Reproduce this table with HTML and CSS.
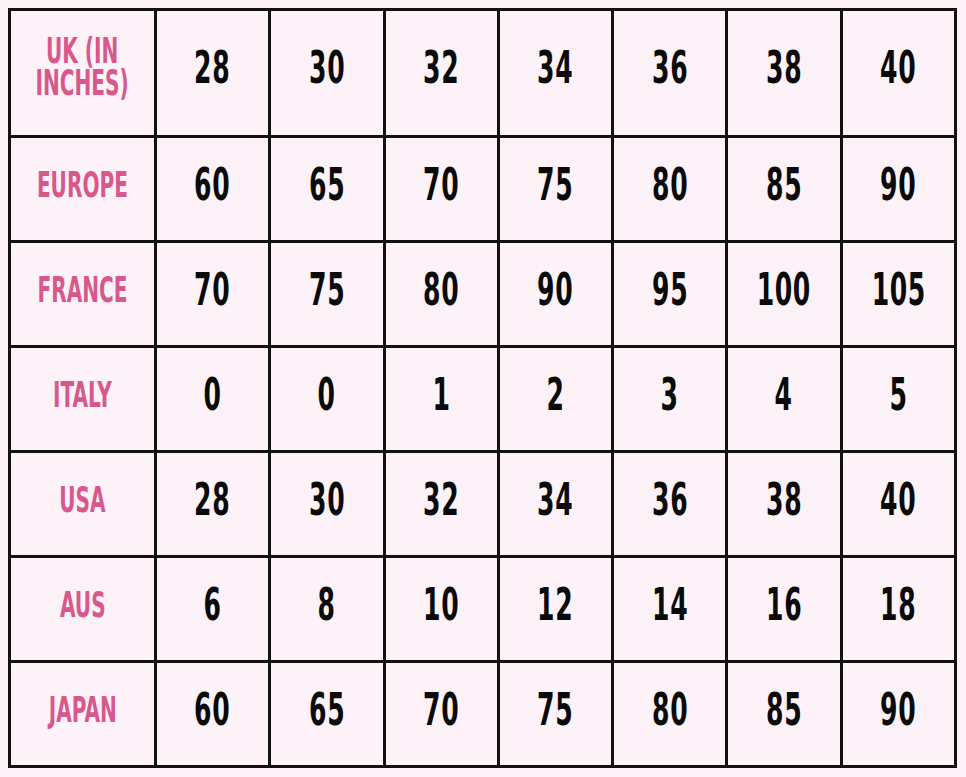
FILE: index.html
```html
<!DOCTYPE html>
<html>
<head>
<meta charset="utf-8">
<link rel="stylesheet" href="styles.css">
</head>
<body>
<div class="chart">
  <div class="cell head first"><span class="t"><span class="ln">UK (IN</span><span class="ln">INCHES)</span></span></div>
  <div class="cell first"><span class="n">28</span></div><div class="cell first"><span class="n">30</span></div><div class="cell first"><span class="n">32</span></div><div class="cell first"><span class="n">34</span></div><div class="cell first"><span class="n">36</span></div><div class="cell first"><span class="n">38</span></div><div class="cell first"><span class="n">40</span></div>

  <div class="cell head"><span class="t">EUROPE</span></div>
  <div class="cell"><span class="n">60</span></div><div class="cell"><span class="n">65</span></div><div class="cell"><span class="n">70</span></div><div class="cell"><span class="n">75</span></div><div class="cell"><span class="n">80</span></div><div class="cell"><span class="n">85</span></div><div class="cell"><span class="n">90</span></div>

  <div class="cell head"><span class="t">FRANCE</span></div>
  <div class="cell"><span class="n">70</span></div><div class="cell"><span class="n">75</span></div><div class="cell"><span class="n">80</span></div><div class="cell"><span class="n">90</span></div><div class="cell"><span class="n">95</span></div><div class="cell"><span class="n">100</span></div><div class="cell"><span class="n">105</span></div>

  <div class="cell head"><span class="t">ITALY</span></div>
  <div class="cell"><span class="n">0</span></div><div class="cell"><span class="n">0</span></div><div class="cell"><span class="n">1</span></div><div class="cell"><span class="n">2</span></div><div class="cell"><span class="n">3</span></div><div class="cell"><span class="n">4</span></div><div class="cell"><span class="n">5</span></div>

  <div class="cell head"><span class="t">USA</span></div>
  <div class="cell"><span class="n">28</span></div><div class="cell"><span class="n">30</span></div><div class="cell"><span class="n">32</span></div><div class="cell"><span class="n">34</span></div><div class="cell"><span class="n">36</span></div><div class="cell"><span class="n">38</span></div><div class="cell"><span class="n">40</span></div>

  <div class="cell head"><span class="t">AUS</span></div>
  <div class="cell"><span class="n">6</span></div><div class="cell"><span class="n">8</span></div><div class="cell"><span class="n">10</span></div><div class="cell"><span class="n">12</span></div><div class="cell"><span class="n">14</span></div><div class="cell"><span class="n">16</span></div><div class="cell"><span class="n">18</span></div>

  <div class="cell head"><span class="t">JAPAN</span></div>
  <div class="cell"><span class="n">60</span></div><div class="cell"><span class="n">65</span></div><div class="cell"><span class="n">70</span></div><div class="cell"><span class="n">75</span></div><div class="cell"><span class="n">80</span></div><div class="cell"><span class="n">85</span></div><div class="cell"><span class="n">90</span></div>
</div>
</body>
</html>
```
FILE: styles.css
```css
html, body {
  margin: 0;
  padding: 0;
  background: #fdf2f8;
}
body {
  padding: 8px 0 0 8px;
  font-family: "DejaVu Sans Condensed", "DejaVu Sans", sans-serif;
  font-weight: bold;
}
.chart {
  width: 949px;
  box-sizing: border-box;
  display: grid;
  grid-template-columns: 143px repeat(7, 1fr);
  grid-template-rows: 124px repeat(6, 102px);
  gap: 3px;
  padding: 3px;
  background: #111;
}
.cell {
  background: #fdf2f8;
  display: flex;
  align-items: center;
  justify-content: center;
  padding-bottom: 9px;
}
.cell.first {
  padding-bottom: 12px;
}
.n {
  display: inline-block;
  font-size: 45px;
  line-height: 1;
  color: #0a0a0a;
  transform: scaleX(0.62);
  letter-spacing: 1px;
}
.t {
  display: inline-flex;
  flex-direction: column;
  align-items: center;
  font-size: 36px;
  line-height: 36px;
  color: #d9588c;
  text-align: center;
  transform: scaleX(0.62);
  white-space: nowrap;
}
.ln {
  display: block;
  height: 32px;
  line-height: 32px;
}
```
